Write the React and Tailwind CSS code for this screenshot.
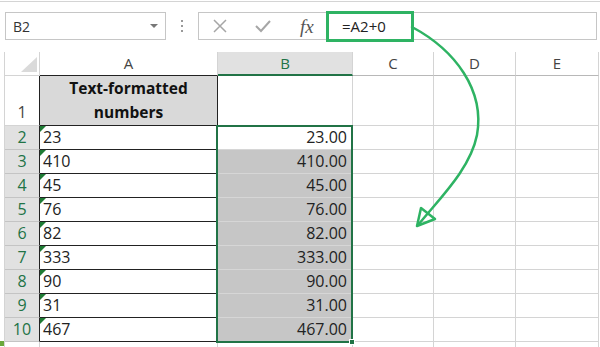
import React from 'react';

const rows = [
  ['23', '23.00'],
  ['410', '410.00'],
  ['45', '45.00'],
  ['76', '76.00'],
  ['82', '82.00'],
  ['333', '333.00'],
  ['90', '90.00'],
  ['31', '31.00'],
  ['467', '467.00'],
];

const Tri = () => (
  <span className="absolute left-0 top-0 w-0 h-0 border-t-[6px] border-r-[6px] border-t-[#1e7b34] border-r-transparent" />
);

export default function App() {
  return (
    <div
      className="relative w-[600px] h-[347px] overflow-hidden bg-white text-[#222]"
      style={{ fontFamily: '"Open Sans", "Liberation Sans", sans-serif' }}
    >
      {/* ── top strip ── */}
      <div className="h-[2px] border-b border-[#d4d4d4]" />

      {/* ── formula bar ── */}
      <div className="flex items-center h-[50px] pb-[2px]">
        <div className="ml-[5px] w-[161px] h-[28px] border border-[#c6c6c6] flex items-center justify-between pl-[7px] pr-[7px]">
          <span className="text-[14px] text-[#333]">B2</span>
          <span className="w-0 h-0 border-l-[4px] border-r-[4px] border-t-[4px] border-l-transparent border-r-transparent border-t-[#777]" />
        </div>
        <div className="ml-[15px] flex flex-col gap-[3px]">
          <span className="w-[2px] h-[2px] bg-[#999]" />
          <span className="w-[2px] h-[2px] bg-[#999]" />
          <span className="w-[2px] h-[2px] bg-[#999]" />
        </div>
        <div className="ml-[15px] w-[128px] h-[28px] border-y border-l border-[#c6c6c6] flex items-center">
          <svg width="14" height="14" viewBox="0 0 14 14" className="ml-[14px]">
            <path d="M1 1 L13 13 M13 1 L1 13" stroke="#a6a6a6" strokeWidth="1.5" />
          </svg>
          <svg width="16" height="14" viewBox="0 0 16 14" className="ml-[28px]">
            <path d="M1 7 L6 12 L15 2" stroke="#a6a6a6" strokeWidth="2" fill="none" />
          </svg>
          <span
            className="ml-[29px] text-[19px] italic text-[#555] leading-none"
            style={{ fontFamily: '"Liberation Serif", serif' }}
          >
            fx
          </span>
        </div>
        <div className="w-[88px] h-[31px] border-[3px] border-[#2eb363] flex items-center pl-[13px]">
          <span className="text-[15px] text-[#222]">=A2+0</span>
        </div>
        <div className="w-[183px] h-[28px] border-y border-r border-[#c6c6c6]" />
      </div>

      {/* ── grid ── */}
      <div className="relative ml-[4px] border-l border-[#d4d4d4] text-[16px]">
        {/* header row */}
        <div className="flex h-[24px] text-[15px]">
          <div className="w-[35px] border-r border-b border-[#d4d4d4] relative">
            <svg width="16" height="15" className="absolute right-[2px] bottom-[3px]">
              <path d="M16 0 L16 15 L0 15 Z" fill="#dadada" />
            </svg>
          </div>
          <div className="w-[178px] border-r border-b border-r-[#d4d4d4] border-b-[#222] flex items-center justify-center text-[#444]">A</div>
          <div className="w-[135px] border-r border-b-2 border-r-[#d4d4d4] border-b-[#217346] bg-[#e1e1e1] flex items-center justify-center text-[#217346]">B</div>
          <div className="w-[81px] border-r border-b border-r-[#d4d4d4] border-b-[#b8b8b8] flex items-center justify-center text-[#444]">C</div>
          <div className="w-[82px] border-r border-b border-r-[#d4d4d4] border-b-[#b8b8b8] flex items-center justify-center text-[#444]">D</div>
          <div className="w-[83px] border-r border-b border-r-[#d4d4d4] border-b-[#b8b8b8] flex items-center justify-center text-[#444]">E</div>
        </div>

        {/* row 1 */}
        <div className="flex h-[50px]">
          <div className="w-[35px] border-r border-b border-r-[#222] border-b-[#d4d4d4] flex items-end justify-center pb-[1px] text-[#444]">1</div>
          <div className="w-[178px] border-r border-b border-[#222] bg-[#d9d9d9] flex items-end justify-center pb-[1px] text-center font-bold leading-[24px] text-[15.5px] text-[#111]">
            Text-formatted<br />numbers
          </div>
          <div className="w-[135px] border-r border-b border-[#d4d4d4]" />
          <div className="w-[81px] border-r border-b border-[#d4d4d4]" />
          <div className="w-[82px] border-r border-b border-[#d4d4d4]" />
          <div className="w-[83px] border-r border-b border-[#d4d4d4]" />
        </div>

        {/* rows 2-10 */}
        {rows.map(([a, b], i) => (
          <div key={i} className="flex h-[24px]">
            <div className="w-[35px] border-r border-b border-r-[#222] border-b-[#c4c4c4] bg-[#e1e1e1] flex items-end justify-center text-[#217346] leading-[23px]">
              {i + 2}
            </div>
            <div className="relative w-[178px] border-r border-b border-[#222] flex items-end pl-[3px] leading-[23px]">
              <Tri />
              {a}
            </div>
            <div
              className={`w-[135px] border-r border-b border-r-[#d4d4d4] border-b-[#d6d6d6] flex items-end justify-end pr-[5px] leading-[23px] ${
                i === 0 ? 'bg-white' : 'bg-[#c6c6c6]'
              }`}
            >
              {b}
            </div>
            <div className="w-[81px] border-r border-b border-[#d4d4d4]" />
            <div className="w-[82px] border-r border-b border-[#d4d4d4]" />
            <div className="w-[83px] border-r border-b border-[#d4d4d4]" />
          </div>
        ))}

        {/* row 11 (cut off) */}
        <div className="flex h-[24px]">
          <div className="w-[35px] border-r border-[#d4d4d4]" />
          <div className="w-[178px] border-r border-[#d4d4d4]" />
          <div className="w-[135px] border-r border-[#d4d4d4]" />
          <div className="w-[81px] border-r border-[#d4d4d4]" />
          <div className="w-[82px] border-r border-[#d4d4d4]" />
          <div className="w-[83px] border-r border-[#d4d4d4]" />
        </div>

        {/* selection B2:B10 */}
        <div className="absolute left-[211px] top-[73px] w-[137px] h-[218px] border-2 border-[#217346] pointer-events-none" />
        <div className="absolute left-[344px] top-[287px] w-[6px] h-[6px] bg-[#217346] border border-white" />
      </div>

      <div className="absolute left-0 top-[341px] w-[4px] h-[5px] bg-[#6aa83c]" />

      {/* arrow */}
      <svg className="absolute left-0 top-0 pointer-events-none" width="600" height="347">
        <path
          d="M412 27 C 455 50, 485 90, 477 135 C 470 170, 438 200, 419 224"
          stroke="#2eb363"
          strokeWidth="2.5"
          fill="none"
          strokeLinecap="round"
        />
        <path d="M421 208 L417 226 L435 219 Z" stroke="#2eb363" strokeWidth="2.5" fill="none" strokeLinejoin="round" />
      </svg>
    </div>
  );
}
